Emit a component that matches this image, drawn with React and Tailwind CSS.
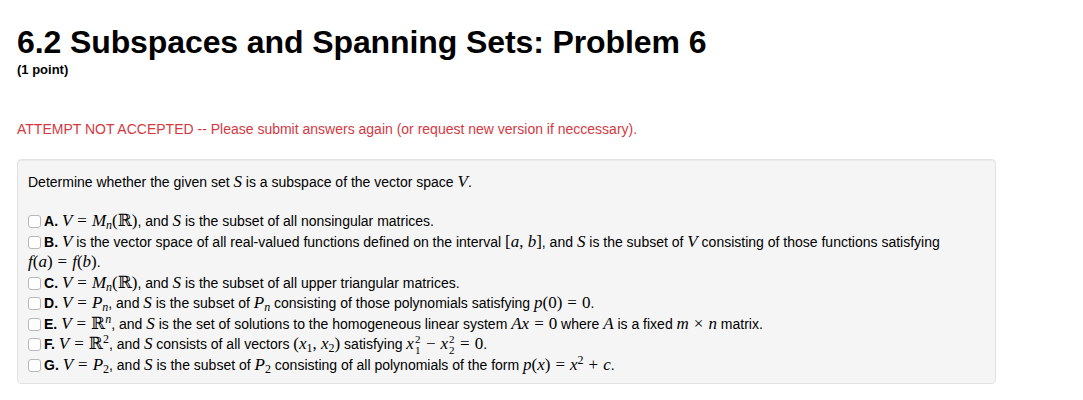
import React from "react";

const serif = { fontFamily: "'Liberation Serif','DejaVu Serif',serif" };

function M({ children }) {
    return <span className="italic text-[17px] leading-none" style={serif}>{children}</span>;
}

function R({ children }) {
    return <span className="text-[17px] leading-none" style={serif}>{children}</span>;
}

function Eq({ children = "=" }) {
    return <span className="text-[17px] leading-none mx-[5px]" style={serif}>{children}</span>;
}

function Sub({ children, italic }) {
    return (
        <sub className={"text-[12px] " + (italic ? "italic" : "")} style={serif}>
            {children}
        </sub>
    );
}

function Sup({ children, italic }) {
    return (
        <sup className={"text-[12px] " + (italic ? "italic" : "")} style={serif}>
            {children}
        </sup>
    );
}

// x with stacked superscript 2 and a subscript index
function XSq({ idx }) {
    return (
        <>
            <M>x</M>
            <span className="relative inline-block w-[7px] text-[11px] leading-none" style={serif}>
                <span className="absolute left-[1px] -top-[6px]">2</span>
                <span className="absolute left-[1px] top-[5px]">{idx}</span>
                &nbsp;
            </span>
        </>
    );
}

function Box() {
    return (
        <span className="inline-block w-[13px] h-[13px] rounded-[3px] border border-[#b8b8b8] bg-white align-[-2px] mr-[3px]" />
    );
}

function Item({ letter, children }) {
    return (
        <div className="h-[20.5px] leading-[20.5px] whitespace-nowrap">
            <Box />
            <b>{letter}.</b> {children}
        </div>
    );
}

function App() {
    return (
        <div className="w-[1083px] h-[400px] bg-white text-black px-[17px] pt-[24px]" style={{ fontFamily: "'Liberation Sans',Arial,sans-serif" }}>
            <h1 className="text-[32px] font-bold leading-[36px] tracking-[-0.1px]">6.2 Subspaces and Spanning Sets: Problem 6</h1>
            <div className="text-[13px] font-bold leading-[16px] mt-[2px]">(1 point)</div>

            <p className="text-[14px] text-[#d6383f] mt-[42px] leading-[18px]">
                ATTEMPT NOT ACCEPTED -- Please submit answers again (or request new version if neccessary).
            </p>

            <div className="mt-[21px] w-[979px] bg-[#f5f5f5] border border-[#e3e3e3] rounded-[4px] px-[10px] pt-[12px] pb-[8px] text-[14px] shadow-[inset_0_1px_1px_rgba(0,0,0,0.05)]">
                <p className="h-[20px] leading-[20px]">
                    Determine whether the given set <M>S</M> is a subspace of the vector space <M>V</M>.
                </p>
                <div className="mt-[19px]">
                    <Item letter="A">
                        <M>V</M><Eq /><M>M</M><Sub italic>n</Sub><R>(ℝ)</R>, and <M>S</M> is the subset of all nonsingular matrices.
                    </Item>
                    <Item letter="B">
                        <M>V</M> is the vector space of all real-valued functions defined on the interval <R>[</R><M>a</M><R>, </R><M>b</M><R>]</R>, and <M>S</M> is the subset of <M>V</M> consisting of those functions satisfying
                    </Item>
                    <div className="h-[20.5px] leading-[20.5px]">
                        <M>f</M><R>(</R><M>a</M><R>)</R><Eq /><M>f</M><R>(</R><M>b</M><R>)</R>.
                    </div>
                    <Item letter="C">
                        <M>V</M><Eq /><M>M</M><Sub italic>n</Sub><R>(ℝ)</R>, and <M>S</M> is the subset of all upper triangular matrices.
                    </Item>
                    <Item letter="D">
                        <M>V</M><Eq /><M>P</M><Sub italic>n</Sub>, and <M>S</M> is the subset of <M>P</M><Sub italic>n</Sub> consisting of those polynomials satisfying <M>p</M><R>(0)</R><Eq /><R>0</R>.
                    </Item>
                    <Item letter="E">
                        <M>V</M><Eq /><R>ℝ</R><Sup italic>n</Sup>, and <M>S</M> is the set of solutions to the homogeneous linear system <M>Ax</M><Eq /><R>0</R> where <M>A</M> is a fixed <M>m</M><Eq>×</Eq><M>n</M> matrix.
                    </Item>
                    <Item letter="F">
                        <M>V</M><Eq /><R>ℝ</R><Sup>2</Sup>, and <M>S</M> consists of all vectors <R>(</R><M>x</M><Sub>1</Sub><R>, </R><M>x</M><Sub>2</Sub><R>)</R> satisfying <XSq idx="1" /><Eq>−</Eq><XSq idx="2" /><Eq /><R>0</R>.
                    </Item>
                    <Item letter="G">
                        <M>V</M><Eq /><M>P</M><Sub>2</Sub>, and <M>S</M> is the subset of <M>P</M><Sub>2</Sub> consisting of all polynomials of the form <M>p</M><R>(</R><M>x</M><R>)</R><Eq /><M>x</M><Sup>2</Sup><Eq>+</Eq><M>c</M>.
                    </Item>
                </div>
            </div>
        </div>
    );
}

export default App;
